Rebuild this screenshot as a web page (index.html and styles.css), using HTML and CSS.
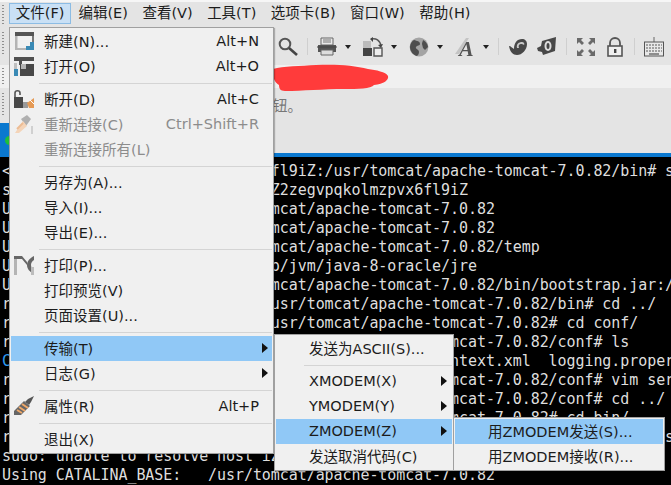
FILE: index.html
```html
<!DOCTYPE html>
<html lang="zh-CN">
<head>
<meta charset="utf-8">
<title>Xshell</title>
<link rel="stylesheet" href="styles.css">
</head>
<body>
<div class="app">
  <header class="menubar">
    <span class="grip"></span>
    <nav class="menus">
      <span class="menu-title active">文件(F)</span>
      <span class="menu-title">编辑(E)</span>
      <span class="menu-title">查看(V)</span>
      <span class="menu-title">工具(T)</span>
      <span class="menu-title">选项卡(B)</span>
      <span class="menu-title">窗口(W)</span>
      <span class="menu-title">帮助(H)</span>
    </nav>
  </header>

  <div class="toolbar">
    <span class="grip"></span>
    <div class="tools">
      <svg class="ico" viewBox="0 0 20 20"><circle cx="7" cy="7" r="5.3" fill="none" stroke="#555" stroke-width="2"/><path d="M11 11l8 7" stroke="#444" stroke-width="2.6"/></svg>
      <span class="sep"></span>
      <div class="drop">
        <svg class="ico" viewBox="0 0 20 20"><path d="M4 1h12v7H4z" fill="#e8e8e8" stroke="#666"/><path d="M6 3h8M6 5h8" stroke="#777"/><path d="M1 8h18v7H1z" fill="#555"/><path d="M4 13h12v5H4z" fill="#ddd" stroke="#666"/><path d="M0 10h20" stroke="#444"/></svg>
        <span class="caret"></span>
      </div>
      <div class="drop">
        <svg class="ico" viewBox="0 0 20 20"><path d="M0 4h8v8H0z" fill="#bcbcbc"/><path d="M0 11h9v8H0z" fill="#444"/><path d="M11 11h8v8h-8z" fill="#eee" stroke="#555" stroke-width="1.4"/><path d="M8 2c5-1 9 1 10 7" fill="none" stroke="#555" stroke-width="1.6"/><path d="M15 8l3 3 2-4zM10 0v5L7 2z" fill="#444"/></svg>
        <span class="caret"></span>
      </div>
      <div class="drop">
        <svg class="ico" viewBox="0 0 20 20"><circle cx="10" cy="10" r="9.4" fill="#a4a4a4"/><path d="M5 3c3 1 6 1 6 4 0 2-3 1-4 3s3 2 3 5c0 2-1 3-2 4C4 18 1 14 1 10c0-3 2-6 4-7zM14 3c2 1 5 4 5 7l-3 3-2-2-1-4c0-2 1-3 1-4z" fill="#4e4e4e"/></svg>
        <span class="caret"></span>
      </div>
      <div class="drop last">
        <svg class="ico" viewBox="0 0 20 20"><path d="M0 17L11 1h3L4 17z" fill="#c4c4c4"/><text class="ico-a" x="4" y="19">A</text></svg>
        <span class="caret"></span>
      </div>
      <span class="sep"></span>
      <svg class="ico" viewBox="0 0 20 20"><path d="M1 9c2 0 3 2 5 3 0-6 3-10 8-10 3 0 5 2 5 5 0 6-5 11-10 11-4 0-7-3-8-9z" fill="#484848"/><path d="M9 11c-1-4 2-6 5-6 2 0 3 2 2 3-1-1-2-1-3-1-2 0-3 2-2 4z" fill="#c8c8c8"/></svg>
      <svg class="ico" viewBox="0 0 20 20"><path d="M0 11l4-2 1-5 14-4-1 14-12 4-1-3-4-1z" fill="#484848"/><ellipse cx="11" cy="9" rx="3.500" ry="5" fill="#ddd"/><ellipse cx="11" cy="9" rx="1.5" ry="3" fill="#444"/></svg>
      <span class="sep"></span>
      <svg class="ico" viewBox="0 0 20 20"><path d="M1 1h6L5 3l3 3-2 2-3-3-2 2zM19 1v6l-2-2-3 3-2-2 3-3-2-2zM1 19v-6l2 2 3-3 2 2-3 3 2 2zM19 19h-6l2-2-3-3 2-2 3 3 2-2z" fill="#6a6a6a"/></svg>
      <svg class="ico" viewBox="0 0 20 20"><path d="M5 9V6a5 5 0 0 1 10 0v3" fill="none" stroke="#555" stroke-width="1.8"/><rect x="3" y="9" width="14" height="10" fill="#efefef" stroke="#555" stroke-width="1.6"/><rect x="9" y="12" width="2.4" height="4" fill="#444"/></svg>
      <span class="sep"></span>
      <svg class="ico" viewBox="0 0 20 20"><path d="M10 0v5" stroke="#666"/><rect x="0.5" y="5" width="19" height="14" fill="#e8e8e8" stroke="#555"/><path d="M2 8h16M2 11h16M2 14h16" stroke="#888" stroke-width="1.4" stroke-dasharray="2 1"/><path d="M5 17h10" stroke="#666" stroke-width="1.4"/></svg>
      <span class="sep"></span>
    </div>
  </div>

  <div class="addressbar"><span class="grip"></span></div>

  <div class="notice">
    <span class="grip"></span>
    <p class="notice-text"><span class="notice-lead">要添加当前会话&#xFF0C;点击左侧的箭头按</span><span class="notice-end">钮&#x3002;</span></p>
  </div>

  <div class="tabstrip">
    <div class="tab"><span class="tab-dot"></span></div>
  </div>

  <pre class="terminal">&lt;root&gt; root@iZ2zegvpqkolmzpvx6fl9iZ:/usr/tomcat/apache-tomcat-7.0.82/bin# sudo
sudo: unable to resolve host iZ2zegvpqkolmzpvx6fl9iZ
Using CATALINA_BASE:   /usr/tomcat/apache-tomcat-7.0.82
Using CATALINA_HOME:   /usr/tomcat/apache-tomcat-7.0.82
Using CATALINA_TMPDIR: /usr/tomcat/apache-tomcat-7.0.82/temp
Using JRE_HOME:        /usr/lib/jvm/java-8-oracle/jre
Using CLASSPATH:       /usr/tomcat/apache-tomcat-7.0.82/bin/bootstrap.jar:/usr
root@iZ2zegvpqkolmzpvx6fl9iZ:/usr/tomcat/apache-tomcat-7.0.82/bin# cd ../
root@iZ2zegvpqkolmzpvx6fl9iZ:/usr/tomcat/apache-tomcat-7.0.82# cd conf/
root@iZ2zegvpqkolmzpvx6fl9iZ:/usr/tomcat/apache-tomcat-7.0.82/conf# ls
<span class="dir">Catalina</span>  catalina.policy  catalina.properties  context.xml  logging.properties
root@iZ2zegvpqkolmzpvx6fl9iZ:/usr/tomcat/apache-tomcat-7.0.82/conf# vim server.xml
root@iZ2zegvpqkolmzpvx6fl9iZ:/usr/tomcat/apache-tomcat-7.0.82/conf# cd ../
root@iZ2zegvpqkolmzpvx6fl9iZ:/usr/tomcat/apache-tomcat-7.0.82# cd bin/
root@iZ2zegvpqkolmzpvx6fl9iZ:/usr/tomcat/apache-tomcat-7.0.82/bin# sudo ./startup.sh
sudo: unable to resolve host iZ2zegvpqkolmzpvx6fl9iZ
Using CATALINA_BASE:   /usr/tomcat/apache-tomcat-7.0.82</pre>

  <svg class="scribble" viewBox="0 0 118 28"><path d="M2 6C12 3 30 3 45 2c18-1 38 0 52 4 8 1 18 3 20 7 1 4-4 8-14 9-3 4-16 4-30 4-20 0-42 2-59 2-5 0-6-3-6-6C4 20 1 14 2 6z"/></svg>

  <div class="dropdown main-menu">
    <div class="item"><svg class="item-ico" viewBox="0 0 20 20"><path d="M1 1h19v4H1z" fill="#555"/><path d="M1 5h2.500v14H1zM3 17h10v2H3z" fill="#b4b4b4"/><path d="M18 5h2v8h-2z" fill="#777"/><path d="M16 11h4v8h-8v-4h4z" fill="#3a8ab5"/></svg><span class="label">新建(N)...</span><span class="key">Alt+N</span></div>
    <div class="item"><svg class="item-ico" viewBox="0 0 20 20"><path d="M0 1h20v4H8v4H5V5H0z" fill="#505050"/><path d="M0 7h3v6H0z" fill="#c0c0c0"/><path d="M0 13h4v7H0z" fill="#3a8ab5"/><path d="M6 8h14v12H6z" fill="#484848"/><path d="M7 8h5v5H7z" fill="#b4b4b4"/></svg><span class="label">打开(O)</span><span class="key">Alt+O</span></div>
    <div class="rule"></div>
    <div class="item"><svg class="item-ico" viewBox="0 0 20 20"><path d="M1 9V4c0-3 5-3 5 0v2" fill="none" stroke="#555" stroke-width="1.6"/><path d="M0 8h9v11H0z" fill="#484848"/><path d="M9 13h5v6H9z" fill="#999"/><path d="M20 9v10h-5l-2-5z" fill="#e59a55"/><path d="M16 11l4 4" stroke="#fff"/></svg><span class="label">断开(D)</span><span class="key">Alt+C</span></div>
    <div class="item disabled"><svg class="item-ico" viewBox="0 0 20 20"><path d="M7 5l6-4 4 4-5 7z" fill="#b0b0b0"/><path d="M1 19L9 7l4 5-8 7z" fill="#f4d4b8"/><path d="M3 15l6-6" stroke="#ecbc94" stroke-width="2"/><path d="M17 12h2v8h-2z" fill="#d0d0d0"/></svg><span class="label">重新连接(C)</span><span class="key">Ctrl+Shift+R</span></div>
    <div class="item disabled"><span class="label">重新连接所有(L)</span></div>
    <div class="rule"></div>
    <div class="item"><span class="label">另存为(A)...</span></div>
    <div class="item"><span class="label">导入(I)...</span></div>
    <div class="item"><span class="label">导出(E)...</span></div>
    <div class="rule"></div>
    <div class="item"><svg class="item-ico" viewBox="0 0 20 20"><path d="M0 1h3v19H0z" fill="#b4b4b4"/><path d="M0 1h8l5 6v3L8 4H0z" fill="#666"/><path d="M20 1c-4 2-7 5-7 9s3 7 6 8l1-3c-2-1-3-3-3-5s1-4 3-5z" fill="#666"/><path d="M17 12h3v8h-3z" fill="#bcbcbc"/></svg><span class="label">打印(P)...</span></div>
    <div class="item"><span class="label">打印预览(V)</span></div>
    <div class="item"><span class="label">页面设置(U)...</span></div>
    <div class="rule"></div>
    <div class="item selected"><span class="label">传输(T)</span><span class="arrow"></span></div>
    <div class="item"><span class="label">日志(G)</span><span class="arrow"></span></div>
    <div class="rule"></div>
    <div class="item"><svg class="item-ico" viewBox="0 0 20 20"><path d="M20 0l-6 3-3 3 4 3 2-3z" fill="#555"/><path d="M0 15L10 5l6 5-9 9H0z" fill="#666"/><path d="M5 11l6 4M8 8l6 4M3 14l5 3" stroke="#f0a868" stroke-width="2"/></svg><span class="label">属性(R)</span><span class="key">Alt+P</span></div>
    <div class="rule"></div>
    <div class="item"><span class="label">退出(X)</span></div>
  </div>

  <div class="dropdown sub-one">
    <div class="item"><span class="label">发送为ASCII(S)...</span></div>
    <div class="rule"></div>
    <div class="item"><span class="label">XMODEM(X)</span><span class="arrow"></span></div>
    <div class="item"><span class="label">YMODEM(Y)</span><span class="arrow"></span></div>
    <div class="item selected"><span class="label">ZMODEM(Z)</span><span class="arrow"></span></div>
    <div class="item"><span class="label">发送取消代码(C)</span></div>
  </div>

  <div class="dropdown sub-two">
    <div class="item selected"><span class="label">用ZMODEM发送(S)...</span></div>
    <div class="item"><span class="label">用ZMODEM接收(R)...</span></div>
  </div>
</div>
</body>
</html>
```
FILE: styles.css
```css
* { box-sizing: border-box; }
html, body { margin: 0; padding: 0; }
body {
  width: 671px;
  height: 485px;
  overflow: hidden;
  background: #e4e4e4;
  font-family: "DejaVu Sans", "Noto Sans CJK SC", sans-serif;
  font-size: 14.5px;
  color: #1c1c1c;
}
.app {
  position: relative;
  width: 671px;
  height: 485px;
  display: flex;
  flex-direction: column;
  overflow: hidden;
  border-top: 2px solid #f6f6f6;
}
.grip {
  position: absolute;
  left: 2px;
  top: 3px;
  bottom: 2px;
  width: 2px;
  background: repeating-linear-gradient(to bottom, #8f8f8f 0 1px, transparent 1px 3px);
}
.menubar {
  position: relative;
  height: 25px;
  flex: none;
}
.menus {
  display: flex;
  align-items: center;
  height: 23px;
  padding-left: 9px;
}
.menu-title {
  height: 21px;
  padding: 0 7.25px;
  line-height: 19px;
  white-space: nowrap;
  border: 1px solid transparent;
  border-width: 1px 0;
}
.menu-title.active {
  background: #c9e0f5;
  border: 1px solid #8cbce4;
  padding: 0 5.75px;
}
.toolbar {
  position: relative;
  height: 38px;
  flex: none;
}
.toolbar .grip { top: 5px; bottom: 10px; }
.tools {
  display: flex;
  align-items: center;
  height: 38px;
  padding-left: 278px;
  padding-top: 1px;
  gap: 9px;
}
.ico {
  width: 20px;
  height: 20px;
  flex: none;
  filter: blur(0.4px);
}
.ico-a {
  font-family: "Liberation Serif", serif;
  font-style: italic;
  font-weight: bold;
  font-size: 22px;
  fill: #555;
}
.sep {
  width: 1px;
  height: 17px;
  flex: none;
  background: #cfcfcf;
}
.drop {
  display: flex;
  align-items: center;
  gap: 8px;
  margin-right: 3px;
}
.drop.last { margin-right: 0; }
.caret {
  width: 0;
  height: 0;
  border-left: 3px solid transparent;
  border-right: 3px solid transparent;
  border-top: 4px solid #222;
}
.addressbar {
  position: relative;
  height: 23px;
  flex: none;
  background: #f0f0f0;
}
.notice {
  position: relative;
  height: 35px;
  flex: none;
}
.notice .grip { top: 5px; bottom: 8px; }
.notice-text {
  display: flex;
  margin: 0;
  padding: 8px 0 0 26px;
  line-height: 20px;
  color: #777;
  white-space: nowrap;
}
.notice-lead {
  flex: none;
  width: 247px;
  overflow: hidden;
}
.notice-end { flex: none; }
.tabstrip {
  height: 34px;
  flex: none;
  border-bottom: 4px solid #0a78cf;
}
.tab {
  width: 120px;
  height: 34px;
  background: #0a78cf;
  display: flex;
  align-items: center;
  padding-left: 5px;
}
.tab-dot {
  width: 9px;
  height: 9px;
  border-radius: 50%;
  background: #1fbf3a;
}
.terminal {
  flex: 1;
  margin: 0;
  padding: 5px 0 0 2px;
  background: #000;
  color: #dedede;
  font-family: "DejaVu Sans Mono", monospace;
  font-size: 15px;
  letter-spacing: -0.07px;
  line-height: 19px;
  white-space: pre;
  overflow: hidden;
}
.dir { color: #2f9bf2; }
.scribble {
  position: absolute;
  left: 271px;
  top: 61px;
  width: 118px;
  height: 28px;
}
.scribble path { fill: #ff3b3b; }
.dropdown {
  position: absolute;
  background: #f0f0f0;
  border: 1px solid #a0a0a0;
  padding: 1px;
  box-shadow: 1px 1px 1px rgba(0, 0, 0, 0.25);
}
.main-menu { left: 9px; top: 25px; width: 265px; }
.sub-one { left: 274px; top: 332px; width: 180px; }
.sub-two { left: 453px; top: 415px; width: 212px; }
.item {
  position: relative;
  display: flex;
  align-items: center;
  justify-content: space-between;
  height: 25px;
  padding-bottom: 2px;
  white-space: nowrap;
}
.main-menu .item { padding-left: 33px; padding-right: 13px; }
.sub-one .item { padding-left: 33px; }
.sub-two .item { padding-left: 33px; }
.item.selected { background: #90c8f6; }
.item.disabled { color: #8c8c8c; }
.item-ico {
  position: absolute;
  left: 3px;
  top: 2px;
  width: 20px;
  height: 20px;
  filter: blur(0.4px);
}
.rule {
  height: 8px;
  margin-left: 28px;
  display: flex;
  align-items: center;
}
.rule::after {
  content: "";
  display: block;
  width: 100%;
  height: 1px;
  background: #d4d4d4;
}
.arrow {
  position: absolute;
  right: 5px;
  top: 7px;
  width: 0;
  height: 0;
  border-top: 5px solid transparent;
  border-bottom: 5px solid transparent;
  border-left: 6px solid #111;
}
.main-menu .arrow { right: 4px; }
```
